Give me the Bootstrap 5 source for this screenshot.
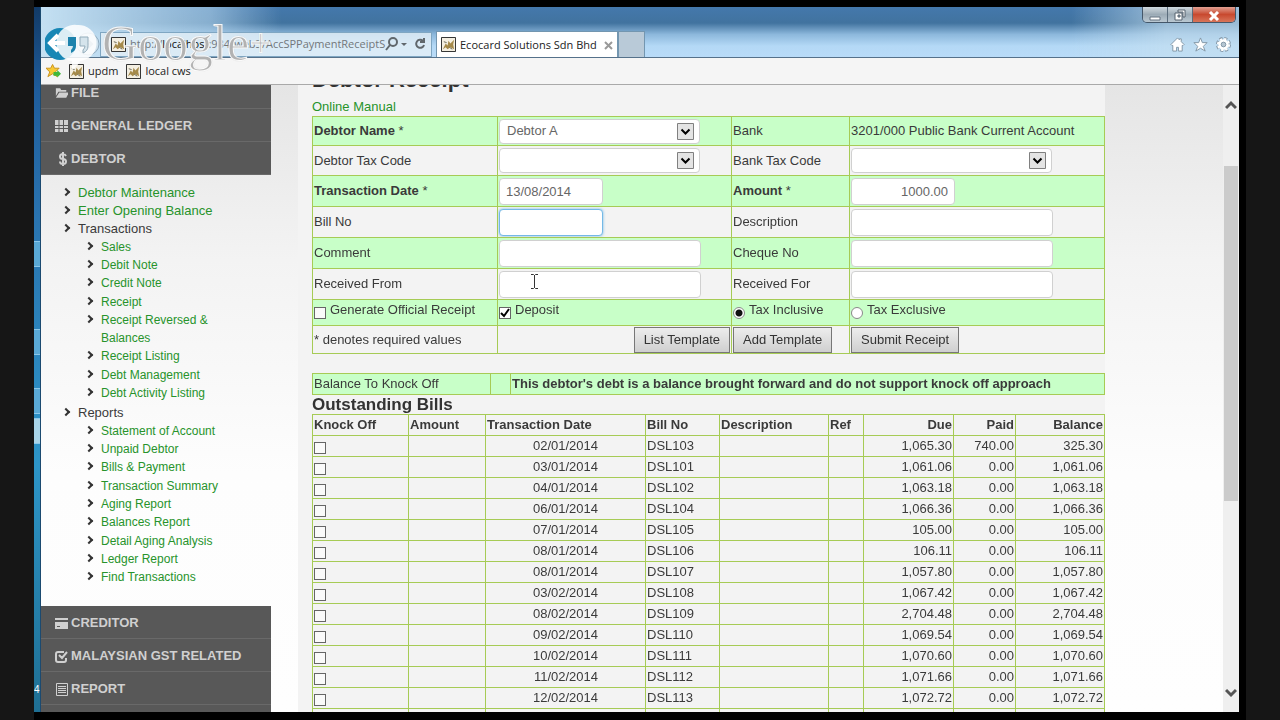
<!DOCTYPE html>
<html lang="en">
<head>
<meta charset="utf-8">
<meta name="viewport" content="width=device-width, initial-scale=1">
<title>Ecocard Solutions Sdn Bhd</title>
<link href="https://cdn.jsdelivr.net/npm/bootstrap@5.3.0/dist/css/bootstrap.min.css" rel="stylesheet">
<style>
  body { background: #000; color: #3a3a3a; font: 13px/18px "Liberation Sans", Arial, sans-serif; }
  a { text-decoration: none; }
  .edge { flex: 0 0 34px; background: #161616; }
  .screen { padding: 7px 7px 8px 0; }
  .desk { flex: 0 0 7px; overflow: hidden; color: #fff; font-size: 10px; line-height: 12px;
    background: linear-gradient(#123a66, #1f5d9c 12%, #2a74b0 30%, #2d95c8 65%, #1f6f93); border-right: 1px solid #1b4a70; }
  .task { height: 26px; margin-bottom: 62px; background: #5aa9d6; border: 1px solid #8cc8ea; border-width: 1px 0; }
  .task.near { margin-bottom: 33px; }
  .task.last { margin-bottom: 4px; }
  .task.lit { background: #a9d4e8; margin-bottom: 240px; }
  .ui { font-family: "Open Sans", "Noto Sans", sans-serif; font-size: 11px; }

  /* browser chrome */
  .chrome { height: 51px; border-bottom: 1px solid #55718a;
    background: linear-gradient(90deg, #c4e0f2 0, #b5d6ee99 170px, #b5d6ee00 240px, #b5d6ee00 86%, #c5dff0aa 94%, #c5dff0aa),
      linear-gradient(#4478ac 0, #41739f 32%, #8db8dc 55%, #b4d9f6 78%, #b9dbf8); }
  .tools { padding-top: 24px; }
  .back { margin: -6px 0; }
  .addr { height: 25px; width: 332px; background: #e3eff6cc; border: 1px solid #7fa6c2; padding: 0 4px 0 10px; color: #72777b; }
  .addr b { font-weight: 400; color: #111; }
  .tab-on { height: 26px; width: 182px; background: #fff; border: 1px solid #7396b0; border-bottom: 0; padding: 0 4px; color: #222; }
  .tab-new { height: 26px; width: 27px; background: #b9cad8; border: 1px solid #7396b0; border-bottom: 0; }
  .winbtns { height: 16px; border: 1px solid #44576a; border-top: 0; border-radius: 0 0 5px 5px; overflow: hidden; right: 3px; top: 0; }
  .winbtns button { border: 0; border-right: 1px solid #5b6d7d; padding: 0; width: 25px; line-height: 1; background: linear-gradient(#d0d9df, #9cabb6 50%, #bac8d2); }
  .winbtns .shut { width: 42px; border: 0; background: linear-gradient(#e2a092, #c8492f 50%, #d8755a); }
  .icon-btn { border: 0; background: none; padding: 0; line-height: 1; }
  .favs { height: 27px; background: #f5f5f5; border-bottom: 1px solid #a9a9a9; padding-left: 5px; }
  .favs a { color: #222; }
  .wmark { left: 2px; top: 7px; pointer-events: none; }
  .wmark span { font: 50px/50px "Liberation Serif", serif; color: #ffffff40; -webkit-text-stroke: 1px #ffffffe6; text-shadow: 0 0 1px #999; }
  .wmark .plus { font-size: 40px; }

  /* page */
  .page { background: linear-gradient(#e5e5e5, #f3f3f3 28%, #fdfdfd 62%, #fefefe); }
  .side { flex: 0 0 230px; margin-top: -9px; }
  .head { height: 33px; background: #585858; border-bottom: 1px solid #696969; color: #d0d0d0; font-weight: 700; padding: 2px 0 0 14px; gap: 3px; }
  .head svg { width: 13px; flex: none; }
  .tree { padding: 9px 0 18px 37px; }
  .tree ul { padding-left: 23px; margin-bottom: 2px; }
  .tree li li:nth-child(3n) { margin-bottom: 1px; }
  .tree a { color: #27932b; }
  .tree a, .tree .grp { display: block; width: 150px; }
  .tree ul a { font-size: 12px; width: 125px; }
  .tree li { position: relative; }
  .tree li::before { content: ""; position: absolute; left: -15px; top: 5px; width: 6px; height: 6px; border: solid #333; border-width: 2px 2px 0 0; transform: rotate(45deg); }

  .panel { margin-left: 27px; padding-left: 14px; background: #f3f3f3; }
  .panel h1 { font-size: 22px; line-height: 24px; font-weight: 700; margin: -17px 0 6px; color: #333; }
  .panel h2 { font-size: 17px; line-height: 19px; font-weight: 700; margin: 0; color: #333; }
  .gut { flex: 0 0 118px; }
  .grid { width: 100%; table-layout: fixed; border-collapse: collapse; }
  .grid td, .grid th { border: 1px solid #a6cb55; padding: 0 1px; height: 21px; white-space: nowrap; line-height: 18px; }
  .form td { height: 31px; }
  .form .low td { height: 29px; }
  .form .low + .low td { height: 30px; }
  .form .opts td { height: 26px; vertical-align: top; padding-top: 1px; }
  .form .opts .tick { margin-top: 6px; }
  .form .acts td { height: 28px; }
  .form tr:nth-child(odd), .knock { background: #c8ffc8; }
  .box { height: 27px; width: 202px; border: 1px solid #d0d0d0; border-radius: 4px; background-color: #fff; color: #666; padding: 0 6px; display: block; font-size: 13px; }
  .box.short { width: 104px; }
  .box:focus { outline: 0; border-color: #74b9e6; box-shadow: 0 0 3px #74b9e6; }
  .low .box { height: 25px; width: 201px; padding-left: 7px; }
  select.box { appearance: none; background: #fff url("data:image/svg+xml,%3Csvg xmlns='http://www.w3.org/2000/svg' width='17' height='17'%3E%3Cpath d='M.5.5h16v16H.5z' fill='%23e4e4e4' stroke='%23808080'/%3E%3Cpath d='M4.500 6.500l4 4 4-4' fill='none' stroke='%23000' stroke-width='2'/%3E%3C/svg%3E") no-repeat right 5px center; }
  .tick { appearance: none; flex: none; width: 12px; height: 12px; border: 1px solid #666; background: #fafafa; margin: 4px 0 0; display: block; }
  .tick:checked { background: #fff url("data:image/svg+xml,%3Csvg xmlns='http://www.w3.org/2000/svg' viewBox='0 0 10 10'%3E%3Cpath d='M1 5l3 3 5-7' fill='none' stroke='%23000' stroke-width='2'/%3E%3C/svg%3E"); }
  .tick.dot { border-radius: 50%; border-color: #888; background: #fff; }
  .tick.dot:checked { background: radial-gradient(circle, #111 0 3px, #fff 4px); }
  .act { height: 26px; border: 1px solid #777; background: linear-gradient(#ededed, #cfcfcf); color: #333; padding: 0 9px; display: inline-block; vertical-align: middle; }
  .bills .when { padding-right: 47px; }
  .bar { flex: 0 0 16px; background: #efefef; padding: 15px 0 14px; }
  .thumb { flex: 0 0 335px; background: #cbcbcb; margin-top: 56px; width: 14px; }
  .cursor { left: 33px; top: 5px; pointer-events: none; }
</style>
</head>
<body>
<svg class="d-none">
  <symbol id="eco" viewBox="0 0 16 16"><path d="M.5.5h15v15H.5z" fill="#f4efe2" stroke="#222"/><path d="M2 13l3-6 2 2 1-5 2 3 4-4-1 5 1 5-4-2-3 2-2-2z" fill="#a58a4b"/><path d="M3 5l3 1M9 11l3 2" stroke="#665"/></symbol>
</svg>
<div class="d-flex vh-100 overflow-hidden">
  <div class="edge"></div>
  <div class="screen d-flex flex-fill overflow-hidden">
    <div class="desk d-flex flex-column justify-content-start">
      <div class="task mt-auto"></div><div class="task near"></div><div class="task last"></div><div class="task lit"></div><div class="mb-3">4</div>
    </div>
    <div class="d-flex flex-column flex-fill overflow-hidden">
      <header class="chrome ui position-relative flex-shrink-0">
        <div class="tools d-flex align-items-center">
          <button class="icon-btn ms-1" aria-label="Back"><svg class="d-block back" width="55" height="34" viewBox="0 0 55 34"><circle cx="15" cy="17" r="16" fill="#1787b5"/><circle cx="43" cy="17" r="11" fill="#cfe2ee" stroke="#8fabc0"/><path d="M38 17h8m-3-4l4 4-4 4" fill="none" stroke="#8fabc0" stroke-width="2"/></svg></button>
          <div class="addr d-flex align-items-center">
            <svg class="me-1 flex-shrink-0" width="15" height="15"><use href="#eco"/></svg>
            <span class="text-nowrap flex-fill">http://<b>localhost</b>:984/web3/AccSPPaymentReceiptS</span>
            <svg class="flex-shrink-0" width="42" height="14" viewBox="0 0 42 14" fill="none" stroke="#60676c" stroke-width="2"><circle cx="8" cy="5" r="4"/><path d="M5 8l-4 5"/><path d="M16 6l3 3 3-3z" fill="#60676c" stroke="none"/><path d="M38 4a4 4 0 1 0 1 4M39 1v4h-4"/></svg>
          </div>
          <div class="tab-on d-flex align-items-center ms-1">
            <svg class="me-1 flex-shrink-0" width="15" height="15"><use href="#eco"/></svg><span class="flex-fill text-nowrap">Ecocard Solutions Sdn Bhd</span>
            <button class="icon-btn" aria-label="Close tab"><svg width="9" height="9" viewBox="0 0 9 9"><path d="M1 1l7 7M8 1L1 8" stroke="#999" stroke-width="2"/></svg></button>
          </div>
          <button class="tab-new p-0" aria-label="New tab"></button>
          <div class="d-flex ms-auto me-2 gap-2">
            <button class="icon-btn" aria-label="Home"><svg width="15" height="15" viewBox="0 0 16 16" fill="#fff" stroke="#8195a5"><path d="M8 1L1 8l1 1h1v6h4v-4h2v4h4V9h1l1-1-3-3V2h-2v1z"/></svg></button>
            <button class="icon-btn" aria-label="Favorites"><svg width="15" height="15" viewBox="0 0 16 16" fill="#fff" stroke="#8195a5"><path d="M8 1l2 5h5l-4 4 2 5-5-3-5 3 2-5-4-4h5z"/></svg></button>
            <button class="icon-btn" aria-label="Settings"><svg width="15" height="15" viewBox="0 0 16 16"><circle cx="8" cy="8" r="6" fill="none" stroke="#8195a5" stroke-width="4" stroke-dasharray="3 1.710"/><circle cx="8" cy="8" r="4" fill="#b5c6d2" stroke="#fff" stroke-width="3"/><circle cx="8" cy="8" r="6" fill="none" stroke="#fff" stroke-width="2" stroke-dasharray="2.500 2.210"/><circle cx="8" cy="8" r="2.500" fill="#b5c6d2" stroke="#8195a5"/></svg></button>
          </div>
        </div>
        <div class="winbtns d-flex position-absolute">
          <button aria-label="Minimize"><svg width="12" height="10"><path d="M1 6h10v3H1z" fill="#fff" stroke="#657380"/></svg></button>
          <button aria-label="Restore"><svg width="12" height="12"><path d="M4 1h7v7H9V3H4zM1 4h7v7H1zM4 6v2h2V6z" fill="#fff" stroke="#56636f"/></svg></button>
          <button class="shut" aria-label="Close"><svg width="12" height="10"><path d="M2 1l8 8M10 1L2 9" stroke="#fff" stroke-width="3"/></svg></button>
        </div>
        <div class="wmark position-absolute d-flex align-items-center z-3">
          <svg class="mt-2" width="55" height="50" viewBox="0 0 55 50"><path d="M15 13l-8 8 8 8M8 21h14" fill="none" stroke="#fff" stroke-width="4"/><path d="M34 3a18 18 0 0 1 3 36q-2 5-8 9v-9A18 18 0 0 1 34 3z" fill="#fff" fill-opacity=".85"/><path d="M25 15h8v9q0 5-5 7v-3q2-2 2-4h-5z" fill="#1d83ad"/><path d="M37 15h8v9q0 5-5 7v-3q2-2 2-4h-5z" fill="#d5e4ec" stroke="#93acba"/></svg>
          <span class="ms-1">Google</span><span class="plus">+</span>
        </div>
      </header>
      <nav class="favs ui d-flex align-items-center gap-2 flex-shrink-0">
        <svg width="15" height="16" viewBox="0 0 16 16"><path d="M7 1l2 4h5l-4 4 2 5-5-3-5 3 2-5-4-4h5z" fill="#f8c933" stroke="#c8901a"/><path d="M8 9h4V7l4 4-4 4v-2H8z" fill="#3fb83a"/></svg>
        <a href="#" class="d-flex align-items-center"><svg class="me-1" width="15" height="15"><use href="#eco"/></svg>updm</a>
        <a href="#" class="d-flex align-items-center"><svg class="me-1" width="15" height="15"><use href="#eco"/></svg>local cws</a>
      </nav>
      <div class="page d-flex flex-fill overflow-hidden">
        <aside class="side">
          <div class="head d-flex align-items-center"><svg viewBox="0 0 15 13" height="12" fill="#d0d0d0"><path d="M1 10V1h5l1 2h6v2H4z"/><path d="M5 6h11l-3 6H1z"/></svg>FILE</div>
          <div class="head d-flex align-items-center"><svg height="12" viewBox="0 0 13 12" fill="#d0d0d0"><path d="M0 0h3.500v5H0zM4.500 0H8v5H4.500zM9 0h4v5H9zM0 6h3.500v2H0zM4.500 6H8v2H4.500zM9 6h4v2H9zM0 9h3.500v3H0zM4.500 9H8v3H4.500zM9 9h4v3H9z"/></svg>GENERAL LEDGER</div>
          <div class="head d-flex align-items-center"><svg height="14" viewBox="0 0 13 14" fill="none" stroke="#d0d0d0" stroke-width="2"><path d="M11 4q-1-2-3-2-3 0-3 2.500T8 7t3 2.500Q11 12 8 12q-3 0-3-2.500M8 0v14"/></svg>DEBTOR</div>
          <ul class="tree list-unstyled mb-0">
            <li><a href="#">Debtor Maintenance</a></li>
            <li><a href="#">Enter Opening Balance</a></li>
            <li><span class="grp">Transactions</span>
              <ul class="list-unstyled">
                <li><a href="#">Sales</a></li><li><a href="#">Debit Note</a></li><li><a href="#">Credit Note</a></li><li><a href="#">Receipt</a></li><li><a href="#">Receipt Reversed &amp; Balances</a></li><li><a href="#">Receipt Listing</a></li><li><a href="#">Debt Management</a></li><li><a href="#">Debt Activity Listing</a></li>
              </ul></li>
            <li><span class="grp">Reports</span>
              <ul class="list-unstyled">
                <li><a href="#">Statement of Account</a></li><li><a href="#">Unpaid Debtor</a></li><li><a href="#">Bills &amp; Payment</a></li><li><a href="#">Transaction Summary</a></li><li><a href="#">Aging Report</a></li><li><a href="#">Balances Report</a></li><li><a href="#">Detail Aging Analysis</a></li><li><a href="#">Ledger Report</a></li><li><a href="#">Find Transactions</a></li>
              </ul></li>
          </ul>
          <div class="head d-flex align-items-center"><svg height="11" viewBox="0 0 13 11" fill="#d0d0d0"><path d="M0 0h13v2H0zM0 4h13v7H0zM2 8v1h3V8z" fill-rule="evenodd"/></svg>CREDITOR</div>
          <div class="head d-flex align-items-center"><svg height="13" viewBox="0 0 13 13" fill="none" stroke="#d0d0d0" stroke-width="2"><path d="M9 2H3Q1 2 1 4v6q0 2 2 2h6q2 0 2-2V8M4 5l3 3 5-6"/></svg>MALAYSIAN GST RELATED</div>
          <div class="head d-flex align-items-center"><svg height="13" viewBox="0 0 13 13" fill="none" stroke="#d0d0d0"><path d="M1.500.5h11v12h-11zM3 3.500h8M3 5.500h8M3 7.500h8M3 9.500h8"/></svg>REPORT</div>
          <div class="head"></div>
        </aside>
        <main class="panel flex-fill">
          <h1>Debtor Receipt</h1>
          <a href="#" style="color:#27932b">Online Manual</a>
          <form onsubmit="return false">
            <table class="grid form">
              <colgroup><col style="width:185px"><col style="width:234px"><col style="width:118px"><col></colgroup>
              <tr class="low"><td><label for="f1"><b>Debtor Name</b> *</label></td><td><select id="f1" class="box"><option>Debtor A</option></select></td><td>Bank</td><td>3201/000 Public Bank Current Account</td></tr>
              <tr class="low"><td><label for="f2">Debtor Tax Code</label></td><td><select id="f2" class="box"><option></option></select></td><td><label for="f3">Bank Tax Code</label></td><td><select id="f3" class="box"><option></option></select></td></tr>
              <tr><td><label for="f4"><b>Transaction Date</b> *</label></td><td><input id="f4" class="box short" value="13/08/2014"></td><td><label for="f5"><b>Amount</b> *</label></td><td><input id="f5" class="box short text-end" value="1000.00"></td></tr>
              <tr><td><label for="f6">Bill No</label></td><td><input id="f6" class="box short" autofocus></td><td><label for="f7">Description</label></td><td><input id="f7" class="box"></td></tr>
              <tr><td><label for="f8">Comment</label></td><td><input id="f8" class="box"></td><td><label for="f9">Cheque No</label></td><td><input id="f9" class="box"></td></tr>
              <tr><td><label for="f10">Received From</label></td><td class="position-relative"><input id="f10" class="box"><svg class="cursor position-absolute" width="7" height="15" viewBox="0 0 7 15" fill="none" stroke="#333"><path d="M0 .5h2.500l1 1 1-1H7M3.500 1v13M0 14.500h2.500l1-1 1 1H7"/></svg></td><td><label for="f11">Received For</label></td><td><input id="f11" class="box"></td></tr>
              <tr class="opts"><td><label class="d-flex gap-1"><input type="checkbox" class="tick">Generate Official Receipt</label></td><td><label class="d-flex gap-1"><input type="checkbox" class="tick" checked>Deposit</label></td><td><label class="d-flex gap-1"><input type="radio" name="tax" class="tick dot" checked>Tax Inclusive</label></td><td><label class="d-flex gap-1"><input type="radio" name="tax" class="tick dot">Tax Exclusive</label></td></tr>
              <tr class="acts"><td>* denotes required values</td><td class="text-end"><button class="act">List Template</button></td><td><button class="act">Add Template</button></td><td><button class="act">Submit Receipt</button></td></tr>
            </table>
          </form>
          <table class="grid knock" style="margin-top:19px">
            <colgroup><col style="width:178px"><col style="width:20px"><col></colgroup>
            <tr><td>Balance To Knock Off</td><td></td><td><b>This debtor's debt is a balance brought forward and do not support knock off approach</b></td></tr>
          </table>
          <h2>Outstanding Bills</h2>
          <table class="grid bills">
            <colgroup><col style="width:96px"><col style="width:77px"><col style="width:160px"><col style="width:74px"><col style="width:109px"><col style="width:35px"><col style="width:90px"><col style="width:62px"><col></colgroup>
            <thead><tr><th>Knock Off</th><th>Amount</th><th>Transaction Date</th><th>Bill No</th><th>Description</th><th>Ref</th><th class="text-end">Due</th><th class="text-end">Paid</th><th class="text-end">Balance</th></tr></thead>
            <tbody id="rows"></tbody>
          </table>
        </main>
        <div class="gut"></div>
        <div class="bar d-flex flex-column align-items-center">
          <svg width="12" height="10" viewBox="0 0 12 10"><path d="M1 8l5-5 5 5" fill="none" stroke="#555" stroke-width="3"/></svg>
          <div class="thumb"></div>
          <svg class="mt-auto" width="12" height="10" viewBox="0 0 12 10"><path d="M1 2l5 5 5-5" fill="none" stroke="#555" stroke-width="3"/></svg>
        </div>
      </div>
    </div>
  </div>
  <div class="edge"></div>
</div>
<script src="https://cdn.jsdelivr.net/npm/bootstrap@5.3.0/dist/js/bootstrap.bundle.min.js"></script>
<script>
  // date, bill number, due, paid, balance
  const bills = [
    ["02/01/2014", "DSL103", "1,065.30", "740.00", "325.30"],
    ["03/01/2014", "DSL101", "1,061.06"],
    ["04/01/2014", "DSL102", "1,063.18"],
    ["06/01/2014", "DSL104", "1,066.36"],
    ["07/01/2014", "DSL105", "105.00"],
    ["08/01/2014", "DSL106", "106.11"],
    ["08/01/2014", "DSL107", "1,057.80"],
    ["03/02/2014", "DSL108", "1,067.42"],
    ["08/02/2014", "DSL109", "2,704.48"],
    ["09/02/2014", "DSL110", "1,069.54"],
    ["10/02/2014", "DSL111", "1,070.60"],
    ["11/02/2014", "DSL112", "1,071.66"],
    ["12/02/2014", "DSL113", "1,072.72"]
  ];
  document.getElementById("rows").innerHTML = bills.map(([date, no, due, paid = "0.00", bal = due]) =>
    `<tr><td><input type="checkbox" class="tick" aria-label="Knock off ${no}"></td><td></td><td class="when text-end">${date}</td><td>${no}</td><td></td><td></td><td class="text-end">${due}</td><td class="text-end">${paid}</td><td class="text-end">${bal}</td></tr>`
  ).join("") + "<tr>" + "<td></td>".repeat(9) + "</tr>";
  document.getElementById("f6").focus({ preventScroll: true });
</script>
</body>
</html>
